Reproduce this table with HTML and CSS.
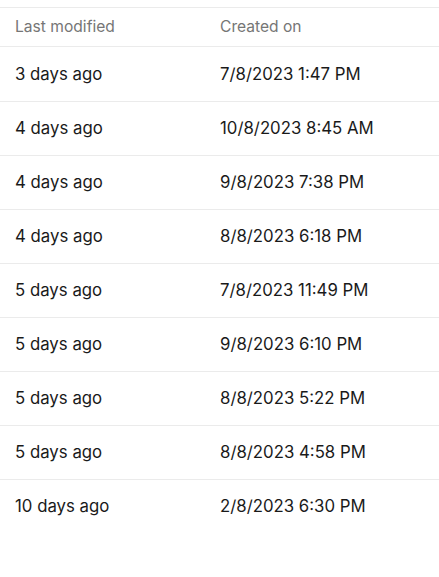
FILE: index.html
```html
<!DOCTYPE html>
<html>
<head>
<meta charset="utf-8">
<link rel="stylesheet" href="styles.css">
</head>
<body>
<div class="table">
  <div class="row head">
    <div class="cell">Last modified</div>
    <div class="cell">Created on</div>
  </div>
  <div class="row first"><div class="cell">3 days ago</div><div class="cell">7/8/2023 1:47 PM</div></div>
  <div class="row"><div class="cell">4 days ago</div><div class="cell">10/8/2023 8:45 AM</div></div>
  <div class="row"><div class="cell">4 days ago</div><div class="cell">9/8/2023 7:38 PM</div></div>
  <div class="row"><div class="cell">4 days ago</div><div class="cell">8/8/2023 6:18 PM</div></div>
  <div class="row"><div class="cell">5 days ago</div><div class="cell">7/8/2023 11:49 PM</div></div>
  <div class="row"><div class="cell">5 days ago</div><div class="cell">9/8/2023 6:10 PM</div></div>
  <div class="row"><div class="cell">5 days ago</div><div class="cell">8/8/2023 5:22 PM</div></div>
  <div class="row"><div class="cell">5 days ago</div><div class="cell">8/8/2023 4:58 PM</div></div>
  <div class="row last"><div class="cell">10 days ago</div><div class="cell">2/8/2023 6:30 PM</div></div>
</div>
</body>
</html>
```
FILE: styles.css
```css
html, body {
  margin: 0;
  padding: 0;
  background: #fff;
}
body {
  font-family: Inter, "Noto Sans", sans-serif;
  color: #1a1a1a;
  padding-top: 7px;
}
.table {
  border-top: 1px solid #ebebeb;
}
.row {
  display: grid;
  grid-template-columns: 205px 1fr;
  height: 53px;
  align-items: center;
  border-bottom: 1px solid #ebebeb;
  font-size: 16.8px;
}
.row .cell {
  margin-top: -1px;
}
.row.first {
  height: 54px;
}
.row.first .cell {
  margin-top: 0;
}
.row.head {
  height: 38px;
  font-size: 15.6px;
  color: #767676;
}
.row.head .cell {
  margin-top: -2px;
}
.row.last {
  border-bottom: none;
}
.cell {
  padding-left: 15px;
}
```
